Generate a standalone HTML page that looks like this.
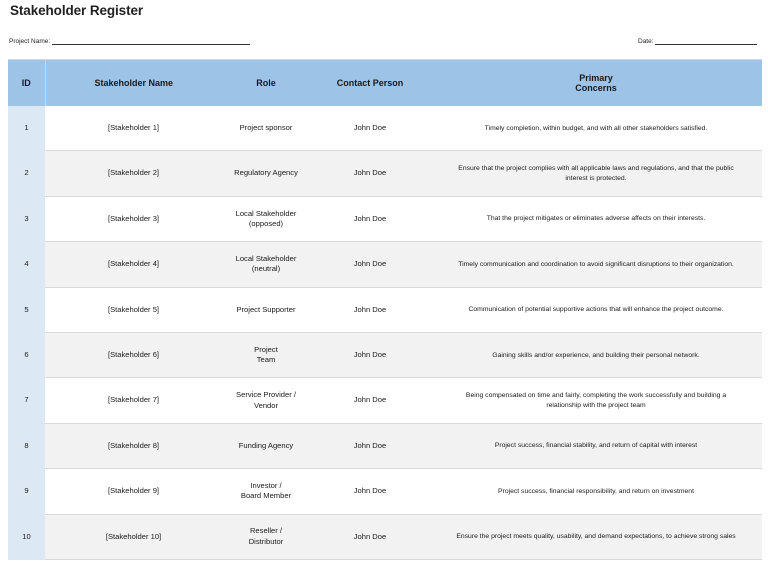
<!DOCTYPE html>
<html><head><meta charset="utf-8"><style>
body{margin:0;width:768px;height:564px;background:#fff;font-family:"Liberation Sans",sans-serif;color:#222;position:relative;overflow:hidden}
h1{position:absolute;left:10px;top:3px;margin:0;font-size:13.5px;font-weight:bold;letter-spacing:-0.1px}
.pn{position:absolute;left:9px;top:38px;font-size:6.5px}
.dt{position:absolute;left:638px;top:38px;font-size:6.5px}
.ln{display:inline-block;border-bottom:1px solid #333;vertical-align:bottom}
table{position:absolute;left:8px;top:59px;width:754px;border-collapse:collapse;table-layout:fixed}
th{background:#9dc3e6;height:46px;font-size:9px;font-weight:bold;padding:0;border-top:1px solid #c9d9ea;color:#1a1a1a}
td{height:44.4px;font-size:7.6px;text-align:center;padding:0;border-bottom:1px solid #d9d9d9;line-height:1.35;color:#1a1a1a}
td.c{font-size:6.8px}
td.id{background:#dce9f5;border-bottom:1px solid #dce9f5}
tr:nth-child(odd) td:not(.id){background:#f2f2f2}
th.id{border-right:1px solid #c9d9ea}
</style></head><body>
<h1>Stakeholder Register</h1>
<div class="pn">Project Name: <span class="ln" style="width:198px"></span></div>
<div class="dt">Date: <span class="ln" style="width:102px"></span></div>
<table>
<colgroup><col style="width:37px"><col style="width:177px"><col style="width:88px"><col style="width:120px"><col style="width:332px"></colgroup>
<tr><th class="id">ID</th><th>Stakeholder Name</th><th>Role</th><th>Contact Person</th><th>Primary<br>Concerns</th></tr>
<tr><td class="id">1</td><td>[Stakeholder 1]</td><td>Project sponsor</td><td>John Doe</td><td class="c">Timely completion, within budget, and with all other stakeholders satisfied.</td></tr>
<tr><td class="id">2</td><td>[Stakeholder 2]</td><td>Regulatory Agency</td><td>John Doe</td><td class="c">Ensure that the project complies with all applicable laws and regulations, and that the public<br>interest is protected.</td></tr>
<tr><td class="id">3</td><td>[Stakeholder 3]</td><td>Local Stakeholder<br>(opposed)</td><td>John Doe</td><td class="c">That the project mitigates or eliminates adverse affects on their interests.</td></tr>
<tr><td class="id">4</td><td>[Stakeholder 4]</td><td>Local Stakeholder<br>(neutral)</td><td>John Doe</td><td class="c">Timely communication and coordination to avoid significant disruptions to their organization.</td></tr>
<tr><td class="id">5</td><td>[Stakeholder 5]</td><td>Project Supporter</td><td>John Doe</td><td class="c">Communication of potential supportive actions that will enhance the project outcome.</td></tr>
<tr><td class="id">6</td><td>[Stakeholder 6]</td><td>Project<br>Team</td><td>John Doe</td><td class="c">Gaining skills and/or experience, and building their personal network.</td></tr>
<tr><td class="id">7</td><td>[Stakeholder 7]</td><td>Service Provider /<br>Vendor</td><td>John Doe</td><td class="c">Being compensated on time and fairly, completing the work successfully and building a<br>relationship with the project team</td></tr>
<tr><td class="id">8</td><td>[Stakeholder 8]</td><td>Funding Agency</td><td>John Doe</td><td class="c">Project success, financial stability, and return of capital with interest</td></tr>
<tr><td class="id">9</td><td>[Stakeholder 9]</td><td>Investor /<br>Board Member</td><td>John Doe</td><td class="c">Project success, financial responsibility, and return on investment</td></tr>
<tr><td class="id">10</td><td>[Stakeholder 10]</td><td>Reseller /<br>Distributor</td><td>John Doe</td><td class="c">Ensure the project meets quality, usability, and demand expectations, to achieve strong sales</td></tr>
</table>
</body></html>
